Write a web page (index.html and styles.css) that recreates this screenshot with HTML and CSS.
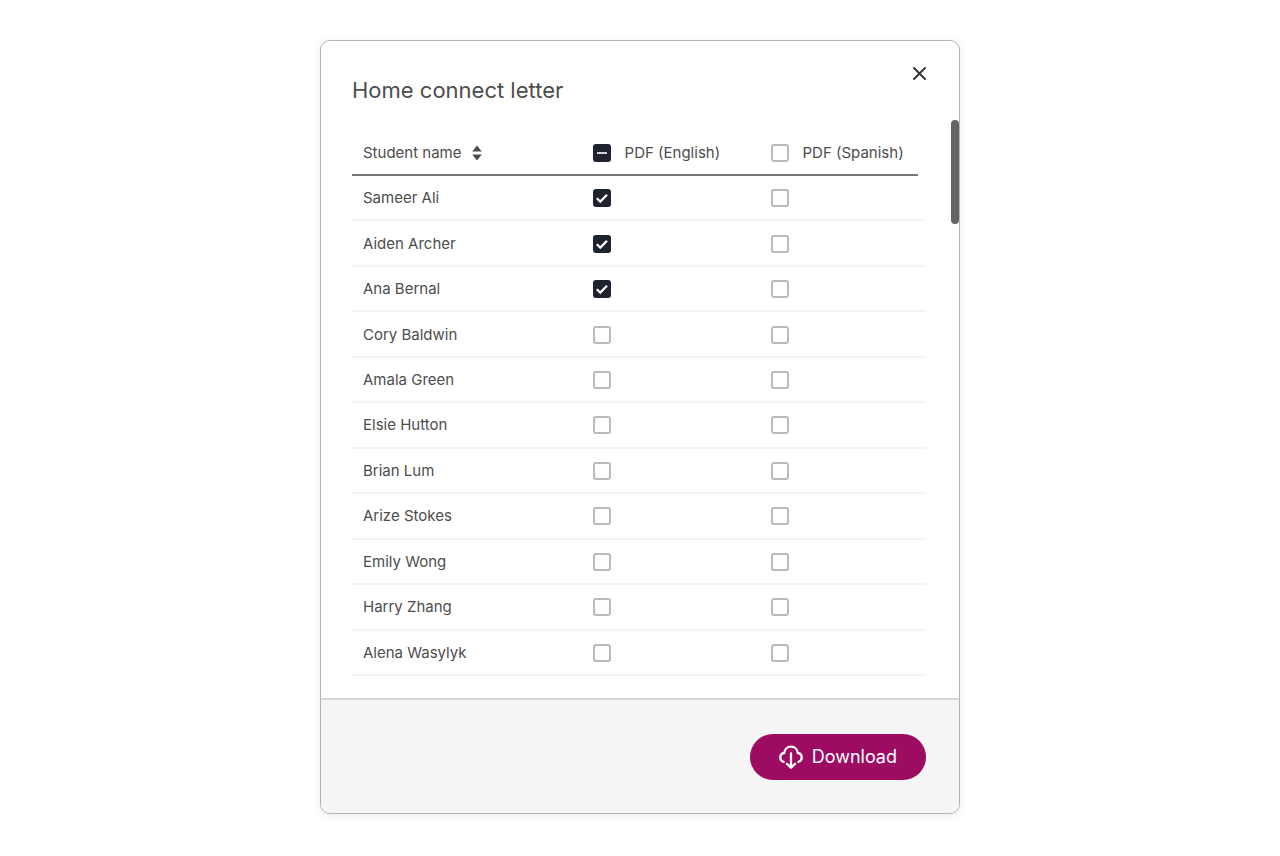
FILE: index.html
```html
<!DOCTYPE html>
<html lang="en">
<head>
<meta charset="utf-8">
<meta name="viewport" content="width=device-width, initial-scale=1">
<title>Home connect letter</title>
<link rel="stylesheet" href="styles.css">
</head>
<body>
<main class="modal" role="dialog" aria-labelledby="modal-title">
  <header class="modal-header">
    <h1 class="modal-title" id="modal-title">Home connect letter</h1>
    <button class="close" type="button" aria-label="Close">
      <svg width="14" height="14" viewBox="0 0 14 14" fill="none" stroke="currentColor" stroke-width="1.9" stroke-linecap="round"><path d="M2 1 13 12M13 1 2 12"/></svg>
    </button>
  </header>
  <div class="modal-body">
    <table class="students">
      <colgroup><col class="col-name"><col class="col-english"><col></colgroup>
      <thead>
        <tr>
          <th scope="col"><button class="sort" type="button">Student name
            <svg width="10" height="16" viewBox="0 0 10 16" fill="currentColor"><path d="M5 .6 9.800 6.600H.2zM5 15.400 9.800 9.400H.2z"/></svg></button></th>
          <th scope="col"><label class="option"><input class="check mixed" type="checkbox" aria-checked="mixed">PDF (English)</label></th>
          <th scope="col"><label class="option"><input class="check" type="checkbox">PDF (Spanish)</label></th>
        </tr>
      </thead>
      <tbody>
        <tr><td>Sameer Ali</td><td><input class="check" type="checkbox" aria-label="Sameer Ali, English" checked></td><td><input class="check" type="checkbox" aria-label="Sameer Ali, Spanish"></td></tr>
        <tr><td>Aiden Archer</td><td><input class="check" type="checkbox" aria-label="Aiden Archer, English" checked></td><td><input class="check" type="checkbox" aria-label="Aiden Archer, Spanish"></td></tr>
        <tr><td>Ana Bernal</td><td><input class="check" type="checkbox" aria-label="Ana Bernal, English" checked></td><td><input class="check" type="checkbox" aria-label="Ana Bernal, Spanish"></td></tr>
        <tr><td>Cory Baldwin</td><td><input class="check" type="checkbox" aria-label="Cory Baldwin, English"></td><td><input class="check" type="checkbox" aria-label="Cory Baldwin, Spanish"></td></tr>
        <tr><td>Amala Green</td><td><input class="check" type="checkbox" aria-label="Amala Green, English"></td><td><input class="check" type="checkbox" aria-label="Amala Green, Spanish"></td></tr>
        <tr><td>Elsie Hutton</td><td><input class="check" type="checkbox" aria-label="Elsie Hutton, English"></td><td><input class="check" type="checkbox" aria-label="Elsie Hutton, Spanish"></td></tr>
        <tr><td>Brian Lum</td><td><input class="check" type="checkbox" aria-label="Brian Lum, English"></td><td><input class="check" type="checkbox" aria-label="Brian Lum, Spanish"></td></tr>
        <tr><td>Arize Stokes</td><td><input class="check" type="checkbox" aria-label="Arize Stokes, English"></td><td><input class="check" type="checkbox" aria-label="Arize Stokes, Spanish"></td></tr>
        <tr><td>Emily Wong</td><td><input class="check" type="checkbox" aria-label="Emily Wong, English"></td><td><input class="check" type="checkbox" aria-label="Emily Wong, Spanish"></td></tr>
        <tr><td>Harry Zhang</td><td><input class="check" type="checkbox" aria-label="Harry Zhang, English"></td><td><input class="check" type="checkbox" aria-label="Harry Zhang, Spanish"></td></tr>
        <tr><td>Alena Wasylyk</td><td><input class="check" type="checkbox" aria-label="Alena Wasylyk, English"></td><td><input class="check" type="checkbox" aria-label="Alena Wasylyk, Spanish"></td></tr>
      </tbody>
    </table>
    <div class="scroll-thumb"></div>
  </div>
  <footer class="modal-footer">
    <button class="download" type="button">
      <svg width="24" height="24" viewBox="0 0 24 24" fill="none" stroke="currentColor" stroke-width="2.3" stroke-linecap="round" stroke-linejoin="round"><path d="M4.600 16.800C2.600 16.200 1.300 14.500 1.300 12.500C1.300 10 3 8.300 5.300 8C5.600 4.300 8.300 1.700 12 1.700S18.400 4.300 18.700 8C21 8.300 22.700 10 22.700 12.500C22.700 14.500 21.400 16.200 19.400 16.800"/><path d="M12 8.500V22.500M8 18.900 12 22.700 16 18.900"/></svg>
      Download
    </button>
  </footer>
</main>
</body>
</html>
```
FILE: styles.css
```css
* {
  box-sizing: border-box;
}

body {
  margin: 0;
  padding: 40px 20px;
  background: #fff;
  color: #4d4d4d;
  font: 15px/20px Inter, "Liberation Sans", sans-serif;
}

button {
  padding: 0;
  border: 0;
  background: none;
  color: inherit;
  font: inherit;
  cursor: pointer;
}

svg {
  display: block;
  flex: none;
}

.modal {
  max-width: 640px;
  margin: 0 auto;
  overflow: hidden;
  border: 1px solid #b4b4b4;
  border-radius: 10px;
  background: #fff;
  box-shadow: 0 2px 10px rgba(0, 0, 0, 0.08);
}

.modal-header {
  display: flex;
  justify-content: space-between;
  align-items: flex-start;
  padding: 24px 31px 0;
}

.modal-title {
  margin: 10px 0 0;
  font-size: 22px;
  line-height: 30px;
  font-weight: 400;
}

.close {
  display: grid;
  place-items: center;
  width: 18px;
  height: 18px;
  color: #333;
}

.modal-body {
  position: relative;
  padding: 26px 33px 22px 31px;
}

.students {
  width: 100%;
  height: 545px;
  border-collapse: separate;
  border-spacing: 0;
  table-layout: fixed;
}

.col-name {
  width: 40%;
}

.col-english {
  width: 31%;
}

th,
td {
  font-weight: 400;
  text-align: left;
  vertical-align: middle;
}

th {
  height: 45px;
  padding: 0 0 1px 11px;
  background: linear-gradient(#757575, #757575) left bottom / 100% 2px no-repeat;
}

th:last-child {
  background-size: calc(100% - 8px) 2px;
}

td {
  padding: 1px 0 0 11px;
  border-bottom: 2px solid #f4f4f4;
}

.sort {
  display: flex;
  align-items: center;
  gap: 10px;
}

.option {
  display: flex;
  align-items: center;
  gap: 14px;
}

.check {
  display: block;
  appearance: none;
  flex: none;
  width: 18px;
  height: 18px;
  margin: 0;
  border: 2px solid #bababa;
  border-radius: 3px;
  background: #fff center / 14px 14px no-repeat;
}

.check:checked,
.check.mixed {
  border-color: #1e2330;
  background-color: #1e2330;
}

.check:checked {
  background-image: url("data:image/svg+xml,%3Csvg xmlns='http://www.w3.org/2000/svg' viewBox='0 0 14 14'%3E%3Cpath d='M1.800 7.200 5.300 10.600 12 3.700' fill='none' stroke='white' stroke-width='2.200'/%3E%3C/svg%3E");
}

.check.mixed {
  background-image: linear-gradient(#d0d1d4, #d0d1d4);
  background-size: 10px 2px;
}

.scroll-thumb {
  position: absolute;
  top: 15px;
  right: 0;
  width: 8px;
  height: 104px;
  border-radius: 4px;
  background: #646464;
}

.modal-footer {
  display: flex;
  justify-content: flex-end;
  padding: 34px 33px 33px;
  border-top: 2px solid #d6d6d6;
  background: #f5f5f5;
}

.download {
  display: flex;
  align-items: center;
  gap: 9px;
  padding: 11px 29px;
  border-radius: 24px;
  background: #9e0b63;
  color: #fff;
  font-size: 18px;
  line-height: 24px;
}
```
